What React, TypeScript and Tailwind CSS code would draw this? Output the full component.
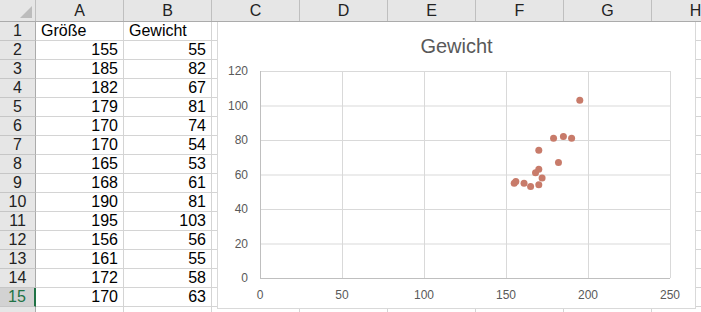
const rows: [string, string][] = [
  ["Größe", "Gewicht"],
  ["155", "55"],
  ["185", "82"],
  ["182", "67"],
  ["179", "81"],
  ["170", "74"],
  ["170", "54"],
  ["165", "53"],
  ["168", "61"],
  ["190", "81"],
  ["195", "103"],
  ["156", "56"],
  ["161", "55"],
  ["172", "58"],
  ["170", "63"],
  ["", ""],
];

const cols = ["A", "B", "C", "D", "E", "F", "G", "H"];

// plot geometry (svg coords)
const X0 = 42;
const X1 = 452;
const Y0 = 220;
const Y1 = 13;
const px = (v: number) => X0 + ((X1 - X0) * v) / 250;
const py = (v: number) => Y0 - ((Y0 - Y1) * v) / 120;

function Chart() {
  const pts = rows.slice(1, 15).map(([a, b]) => [Number(a), Number(b)]);
  return (
    <div className="absolute left-[217px] top-[22px] w-[479px] h-[287px] bg-white border-l border-r border-b border-[#d9d9d9]">
      <div className="h-[36px] pt-[12px] text-center text-[20px] leading-[24px] text-[#595959]">Gewicht</div>
      <svg width="478" height="250" className="block">
        {[20, 40, 60, 80, 100, 120].map((v) => (
          <line key={"h" + v} x1={X0} x2={X1} y1={py(v) + 0.5} y2={py(v) + 0.5} stroke="#d9d9d9" />
        ))}
        {[50, 100, 150, 200, 250].map((v) => (
          <line key={"v" + v} x1={px(v) + 0.5} x2={px(v) + 0.5} y1={Y1} y2={Y0} stroke="#d9d9d9" />
        ))}
        <line x1={X0 + 0.5} x2={X0 + 0.5} y1={Y1} y2={Y0 + 0.5} stroke="#bfbfbf" />
        <line x1={X0} x2={X1} y1={Y0 + 0.5} y2={Y0 + 0.5} stroke="#bfbfbf" />
        {[0, 20, 40, 60, 80, 100, 120].map((v) => (
          <text key={"yl" + v} x={30} y={py(v) + 4} textAnchor="end" fontSize="12" fill="#595959" fontFamily="Liberation Sans, sans-serif">
            {v}
          </text>
        ))}
        {[0, 50, 100, 150, 200, 250].map((v) => (
          <text key={"xl" + v} x={px(v)} y={241} textAnchor="middle" fontSize="12" fill="#595959" fontFamily="Liberation Sans, sans-serif">
            {v}
          </text>
        ))}
        {pts.map(([a, b], i) => (
          <circle key={i} cx={px(a)} cy={py(b)} r="3.5" fill="#c87b6a" />
        ))}
      </svg>
    </div>
  );
}

export default function App() {
  return (
    <div className="relative w-[701px] h-[312px] overflow-hidden bg-white font-['Liberation_Sans',sans-serif] text-[16px] text-black">
      {/* column headers */}
      <div className="flex h-[22px] bg-[#e6e6e6] border-b border-[#ababab]">
        <div className="w-[36px] shrink-0 relative border-r border-[#bfbfbf]">
          <div className="absolute right-[3px] bottom-[3px] w-0 h-0 border-l-[12px] border-l-transparent border-b-[12px] border-b-[#bcbcbc]" />
        </div>
        {cols.map((c) => (
          <div key={c} className="w-[88px] shrink-0 flex items-end justify-center pb-[1px] leading-[18px] text-[#222] border-r border-[#bfbfbf]">
            {c}
          </div>
        ))}
      </div>

      {/* rows */}
      {rows.map(([a, b], i) => {
        const sel = i === 14;
        return (
          <div key={i} className="flex h-[19px]">
            <div
              className={
                sel
                  ? "w-[36px] shrink-0 flex items-center justify-center bg-[#d2d2d2] text-[#217346] border-r-2 border-r-[#217346] border-b border-b-[#c6c6c6]"
                  : "w-[36px] shrink-0 flex items-center justify-center bg-[#e6e6e6] text-[#222] border-r border-r-[#ababab] border-b border-b-[#c6c6c6]"
              }
            >
              {i < 15 ? i + 1 : ""}
            </div>
            <div className={(i === 0 ? "text-left pl-[5px]" : "text-right pr-[5px]") + " w-[88px] shrink-0 leading-[18px] border-r border-b border-[#d4d4d4]"}>{a}</div>
            <div className={(i === 0 ? "text-left pl-[5px]" : "text-right pr-[5px]") + " w-[88px] shrink-0 leading-[18px] border-r border-b border-[#d4d4d4]"}>{b}</div>
            {cols.slice(2).map((c) => (
              <div key={c} className="w-[88px] shrink-0 border-r border-b border-[#d4d4d4]" />
            ))}
          </div>
        );
      })}

      <Chart />
    </div>
  );
}
